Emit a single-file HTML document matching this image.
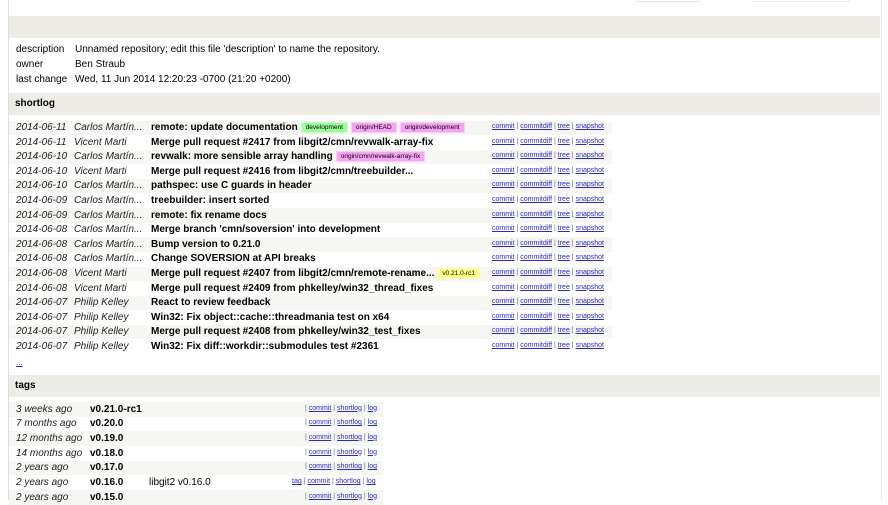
<!DOCTYPE html>
<html><head><meta charset="utf-8">
<style>
html,body{margin:0;padding:0;background:#fff;width:888px;height:500px;overflow:hidden;font-family:"Liberation Sans",Arial,sans-serif;color:#000}
.pg{position:absolute;left:8px;top:0;width:872px;height:500px;border-left:1px solid #ddd;border-right:1px solid #e8e8e8;background:#fff}
.bar{position:absolute;left:9px;width:871px;height:22px;background:#edece6;font-weight:bold;font-size:10px;line-height:22px}
.bar span{position:absolute;left:6px}
.t{position:absolute;font-size:10px;white-space:nowrap;line-height:14px}
.row{position:absolute;left:9px;height:14.6px}
.row.s{background:#f6f6f2}
i{font-style:italic;color:#222}
b{font-weight:bold}
.lk{position:absolute;font-size:7px;color:#6d6d6d;white-space:nowrap;line-height:14px}
.lk a{color:#2a2ac8;text-decoration:underline}
.tag{display:inline-block;font-size:6.5px;font-weight:normal;line-height:9px;padding:0 4px;margin-left:3px;vertical-align:1px;border:1px solid}
.g{background:#9f9;border-color:#cfc}
.p{background:#f5a5f5;border-color:#fcf}
.y{background:#ff8;border-color:#ffb}
</style></head><body>
<div class="pg"></div>
<div style="position:absolute;left:636px;top:-3px;width:62px;height:3px;border:1px solid #e4e4e4;border-radius:2px"></div>
<div style="position:absolute;left:752px;top:-3px;width:96px;height:3px;border:1px solid #eee"></div>
<div class="bar" style="top:16px"></div>
<div class="t" style="left:16px;top:43px">description</div><div class="t" style="left:75px;top:43px">Unnamed repository; edit this file 'description' to name the repository.</div>
<div class="t" style="left:16px;top:58px">owner</div><div class="t" style="left:75px;top:58px">Ben Straub</div>
<div class="t" style="left:16px;top:73px">last change</div><div class="t" style="left:75px;top:73px">Wed, 11 Jun 2014 12:20:23 -0700 (21:20 +0200)</div>
<div class="bar" style="top:93px"><span>shortlog</span></div>

<div class="t" style="left:16px;top:356px;font-size:8px;color:#2a2ac8;text-decoration:underline">...</div>
<div class="bar" style="top:375px"><span>tags</span></div>

<div class="row s" style="top:120.5px;width:603px"></div>
<div class="row s" style="top:149.7px;width:603px"></div>
<div class="row s" style="top:178.9px;width:603px"></div>
<div class="row s" style="top:208.1px;width:603px"></div>
<div class="row s" style="top:237.3px;width:603px"></div>
<div class="row s" style="top:266.5px;width:603px"></div>
<div class="row s" style="top:295.7px;width:603px"></div>
<div class="row s" style="top:324.9px;width:603px"></div>

<div class="t" style="left:16px;top:121px"><i>2014-06-11</i></div><div class="t" style="left:74px;top:121px"><i>Carlos Martín...</i></div><div class="t" style="left:151px;top:121px"><b>remote: update documentation</b><span class="tag g">development</span><span class="tag p">origin/HEAD</span><span class="tag p">origin/development</span></div>
<div class="t" style="left:16px;top:135.6px"><i>2014-06-11</i></div><div class="t" style="left:74px;top:135.6px"><i>Vicent Marti</i></div><div class="t" style="left:151px;top:135.6px"><b>Merge pull request #2417 from libgit2/cmn/revwalk-array-fix</b></div>
<div class="t" style="left:16px;top:150.2px"><i>2014-06-10</i></div><div class="t" style="left:74px;top:150.2px"><i>Carlos Martín...</i></div><div class="t" style="left:151px;top:150.2px"><b>revwalk: more sensible array handling</b><span class="tag p">origin/cmn/revwalk-array-fix</span></div>
<div class="t" style="left:16px;top:164.8px"><i>2014-06-10</i></div><div class="t" style="left:74px;top:164.8px"><i>Vicent Marti</i></div><div class="t" style="left:151px;top:164.8px"><b>Merge pull request #2416 from libgit2/cmn/treebuilder...</b></div>
<div class="t" style="left:16px;top:179.4px"><i>2014-06-10</i></div><div class="t" style="left:74px;top:179.4px"><i>Carlos Martín...</i></div><div class="t" style="left:151px;top:179.4px"><b>pathspec: use C guards in header</b></div>
<div class="t" style="left:16px;top:194px"><i>2014-06-09</i></div><div class="t" style="left:74px;top:194px"><i>Carlos Martín...</i></div><div class="t" style="left:151px;top:194px"><b>treebuilder: insert sorted</b></div>
<div class="t" style="left:16px;top:208.6px"><i>2014-06-09</i></div><div class="t" style="left:74px;top:208.6px"><i>Carlos Martín...</i></div><div class="t" style="left:151px;top:208.6px"><b>remote: fix rename docs</b></div>
<div class="t" style="left:16px;top:223.2px"><i>2014-06-08</i></div><div class="t" style="left:74px;top:223.2px"><i>Carlos Martín...</i></div><div class="t" style="left:151px;top:223.2px"><b>Merge branch 'cmn/soversion' into development</b></div>
<div class="t" style="left:16px;top:237.8px"><i>2014-06-08</i></div><div class="t" style="left:74px;top:237.8px"><i>Carlos Martín...</i></div><div class="t" style="left:151px;top:237.8px"><b>Bump version to 0.21.0</b></div>
<div class="t" style="left:16px;top:252.4px"><i>2014-06-08</i></div><div class="t" style="left:74px;top:252.4px"><i>Carlos Martín...</i></div><div class="t" style="left:151px;top:252.4px"><b>Change SOVERSION at API breaks</b></div>
<div class="t" style="left:16px;top:267px"><i>2014-06-08</i></div><div class="t" style="left:74px;top:267px"><i>Vicent Marti</i></div><div class="t" style="left:151px;top:267px"><b>Merge pull request #2407 from libgit2/cmn/remote-rename...</b><span class="tag y">v0.21.0-rc1</span></div>
<div class="t" style="left:16px;top:281.6px"><i>2014-06-08</i></div><div class="t" style="left:74px;top:281.6px"><i>Vicent Marti</i></div><div class="t" style="left:151px;top:281.6px"><b>Merge pull request #2409 from phkelley/win32_thread_fixes</b></div>
<div class="t" style="left:16px;top:296.2px"><i>2014-06-07</i></div><div class="t" style="left:74px;top:296.2px"><i>Philip Kelley</i></div><div class="t" style="left:151px;top:296.2px"><b>React to review feedback</b></div>
<div class="t" style="left:16px;top:310.8px"><i>2014-06-07</i></div><div class="t" style="left:74px;top:310.8px"><i>Philip Kelley</i></div><div class="t" style="left:151px;top:310.8px"><b>Win32: Fix object::cache::threadmania test on x64</b></div>
<div class="t" style="left:16px;top:325.4px"><i>2014-06-07</i></div><div class="t" style="left:74px;top:325.4px"><i>Philip Kelley</i></div><div class="t" style="left:151px;top:325.4px"><b>Merge pull request #2408 from phkelley/win32_test_fixes</b></div>
<div class="t" style="left:16px;top:340px"><i>2014-06-07</i></div><div class="t" style="left:74px;top:340px"><i>Philip Kelley</i></div><div class="t" style="left:151px;top:340px"><b>Win32: Fix diff::workdir::submodules test #2361</b></div>

<div class="lk" style="left:492px;top:120px"><a>commit</a> | <a>commitdiff</a> | <a>tree</a> | <a>snapshot</a></div>
<div class="lk" style="left:492px;top:134.6px"><a>commit</a> | <a>commitdiff</a> | <a>tree</a> | <a>snapshot</a></div>
<div class="lk" style="left:492px;top:149.2px"><a>commit</a> | <a>commitdiff</a> | <a>tree</a> | <a>snapshot</a></div>
<div class="lk" style="left:492px;top:163.8px"><a>commit</a> | <a>commitdiff</a> | <a>tree</a> | <a>snapshot</a></div>
<div class="lk" style="left:492px;top:178.4px"><a>commit</a> | <a>commitdiff</a> | <a>tree</a> | <a>snapshot</a></div>
<div class="lk" style="left:492px;top:193px"><a>commit</a> | <a>commitdiff</a> | <a>tree</a> | <a>snapshot</a></div>
<div class="lk" style="left:492px;top:207.6px"><a>commit</a> | <a>commitdiff</a> | <a>tree</a> | <a>snapshot</a></div>
<div class="lk" style="left:492px;top:222.2px"><a>commit</a> | <a>commitdiff</a> | <a>tree</a> | <a>snapshot</a></div>
<div class="lk" style="left:492px;top:236.8px"><a>commit</a> | <a>commitdiff</a> | <a>tree</a> | <a>snapshot</a></div>
<div class="lk" style="left:492px;top:251.4px"><a>commit</a> | <a>commitdiff</a> | <a>tree</a> | <a>snapshot</a></div>
<div class="lk" style="left:492px;top:266px"><a>commit</a> | <a>commitdiff</a> | <a>tree</a> | <a>snapshot</a></div>
<div class="lk" style="left:492px;top:280.6px"><a>commit</a> | <a>commitdiff</a> | <a>tree</a> | <a>snapshot</a></div>
<div class="lk" style="left:492px;top:295.2px"><a>commit</a> | <a>commitdiff</a> | <a>tree</a> | <a>snapshot</a></div>
<div class="lk" style="left:492px;top:309.8px"><a>commit</a> | <a>commitdiff</a> | <a>tree</a> | <a>snapshot</a></div>
<div class="lk" style="left:492px;top:324.4px"><a>commit</a> | <a>commitdiff</a> | <a>tree</a> | <a>snapshot</a></div>
<div class="lk" style="left:492px;top:339px"><a>commit</a> | <a>commitdiff</a> | <a>tree</a> | <a>snapshot</a></div>

<div class="row s" style="top:402px;width:374px;height:14.7px"></div>
<div class="row s" style="top:431.4px;width:374px;height:14.7px"></div>
<div class="row s" style="top:460.8px;width:374px;height:14.7px"></div>
<div class="row s" style="top:490.2px;width:374px;height:14.7px"></div>

<div class="t" style="left:16px;top:402.5px"><i>3 weeks ago</i></div><div class="t" style="left:90px;top:402.5px"><b>v0.21.0-rc1</b></div>
<div class="t" style="left:16px;top:417.2px"><i>7 months ago</i></div><div class="t" style="left:90px;top:417.2px"><b>v0.20.0</b></div>
<div class="t" style="left:16px;top:431.9px"><i>12 months ago</i></div><div class="t" style="left:90px;top:431.9px"><b>v0.19.0</b></div>
<div class="t" style="left:16px;top:446.6px"><i>14 months ago</i></div><div class="t" style="left:90px;top:446.6px"><b>v0.18.0</b></div>
<div class="t" style="left:16px;top:461.3px"><i>2 years ago</i></div><div class="t" style="left:90px;top:461.3px"><b>v0.17.0</b></div>
<div class="t" style="left:16px;top:476px"><i>2 years ago</i></div><div class="t" style="left:90px;top:476px"><b>v0.16.0</b></div><div class="t" style="left:149px;top:476px">libgit2 v0.16.0</div>
<div class="t" style="left:16px;top:490.7px"><i>2 years ago</i></div><div class="t" style="left:90px;top:490.7px"><b>v0.15.0</b></div>

<div class="lk" style="left:305px;top:401.5px">| <a>commit</a> | <a>shortlog</a> | <a>log</a></div>
<div class="lk" style="left:305px;top:416.2px">| <a>commit</a> | <a>shortlog</a> | <a>log</a></div>
<div class="lk" style="left:305px;top:430.9px">| <a>commit</a> | <a>shortlog</a> | <a>log</a></div>
<div class="lk" style="left:305px;top:445.6px">| <a>commit</a> | <a>shortlog</a> | <a>log</a></div>
<div class="lk" style="left:305px;top:460.3px">| <a>commit</a> | <a>shortlog</a> | <a>log</a></div>
<div class="lk" style="left:292px;top:475px"><a>tag</a> | <a>commit</a> | <a>shortlog</a> | <a>log</a></div>
<div class="lk" style="left:305px;top:489.7px">| <a>commit</a> | <a>shortlog</a> | <a>log</a></div>
</body></html>
